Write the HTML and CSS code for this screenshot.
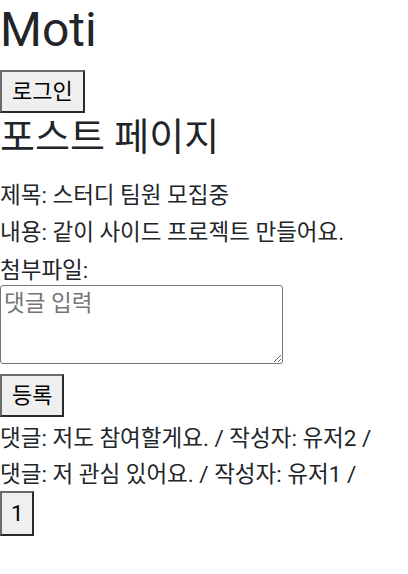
FILE: index.html
```html
<!DOCTYPE html>
<html lang="ko">
<head>
<meta charset="utf-8">
<title>Moti</title>
<link rel="stylesheet" href="styles.css">
</head>
<body>
<header class="site-header">
  <h1 class="logo">Moti</h1>
  <button class="btn" type="button">로그인</button>
</header>
<main class="post">
  <h2 class="post-title">포스트 페이지</h2>
  <div class="line">제목: 스터디 팀원 모집중</div>
  <div class="line">내용: 같이 사이드 프로젝트 만들어요.</div>
  <div class="line">첨부파일:</div>
  <form class="comment-form">
    <textarea class="comment-input" placeholder="댓글 입력"></textarea>
    <button class="btn" type="button">등록</button>
  </form>
  <div class="comments">
    <div class="line">댓글: 저도 참여할게요. / 작성자: 유저2 /</div>
    <div class="line">댓글: 저 관심 있어요. / 작성자: 유저1 /</div>
  </div>
  <div class="pager">
    <button class="btn" type="button">1</button>
  </div>
</main>
</body>
</html>
```
FILE: styles.css
```css
html, body {
  margin: 0;
  padding: 0;
  background: #ffffff;
}
body {
  font-family: Roboto, "Noto Sans CJK KR", sans-serif;
  font-size: 22.5px;
  line-height: 1.5;
  color: #212529;
}
.logo {
  margin: 0 0 10px 0;
  font-size: 48px;
  font-weight: 400;
  line-height: 60px;
}
.btn {
  display: block;
  font-family: Roboto, "Noto Sans CJK KR", sans-serif;
  font-size: 22px;
  line-height: 29px;
  color: #000;
  background: #efefef;
  border: 2px solid #6b6b6b;
  border-right-color: #2a2a2a;
  border-bottom-color: #2a2a2a;
  padding: 5px 10px;
  margin: 0;
  border-radius: 0;
}
.post-title {
  margin: 0;
  font-size: 38px;
  font-weight: 400;
  line-height: 48px;
  padding-bottom: 11px;
}
.line {
  margin-top: 7.5px;
  line-height: 30px;
}
.comment-form {
  margin: 0;
}
.comment-input {
  display: block;
  box-sizing: border-box;
  width: 283px;
  height: 79px;
  margin: 0 0 10px 0;
  padding: 1px 3px;
  font-family: Roboto, "Noto Sans CJK KR", sans-serif;
  font-size: 22.5px;
  line-height: 1.5;
  color: #212529;
  border: 1px solid #767676;
  border-radius: 3px;
}
.comment-input::placeholder {
  color: #757575;
}
.comments .line {
  margin-top: 6px;
}
.pager {
  padding-top: 2px;
}
.pager .btn {
  padding: 6px 9px;
}
```
